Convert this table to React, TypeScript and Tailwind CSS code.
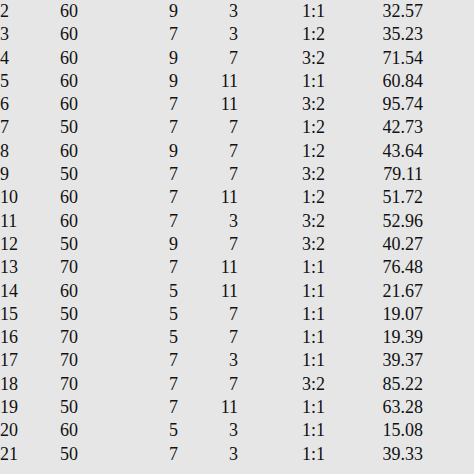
import React from 'react';

type Row = [string, string, string, string, string, string];

const rows: Row[] = [
  ['2', '60', '9', '3', '1:1', '32.57'],
  ['3', '60', '7', '3', '1:2', '35.23'],
  ['4', '60', '9', '7', '3:2', '71.54'],
  ['5', '60', '9', '11', '1:1', '60.84'],
  ['6', '60', '7', '11', '3:2', '95.74'],
  ['7', '50', '7', '7', '1:2', '42.73'],
  ['8', '60', '9', '7', '1:2', '43.64'],
  ['9', '50', '7', '7', '3:2', '79.11'],
  ['10', '60', '7', '11', '1:2', '51.72'],
  ['11', '60', '7', '3', '3:2', '52.96'],
  ['12', '50', '9', '7', '3:2', '40.27'],
  ['13', '70', '7', '11', '1:1', '76.48'],
  ['14', '60', '5', '11', '1:1', '21.67'],
  ['15', '50', '5', '7', '1:1', '19.07'],
  ['16', '70', '5', '7', '1:1', '19.39'],
  ['17', '70', '7', '3', '1:1', '39.37'],
  ['18', '70', '7', '7', '3:2', '85.22'],
  ['19', '50', '7', '11', '1:1', '63.28'],
  ['20', '60', '5', '3', '1:1', '15.08'],
  ['21', '50', '7', '3', '1:1', '39.33'],
];

export default function App() {
  return (
    <div className="w-[474px] h-[474px] overflow-hidden bg-[#e6e6e6] text-[#111] font-['Liberation_Serif',serif] text-[18px] leading-[23.3px]">
      {rows.map((r, i) => (
        <div key={i} className="flex">
          <span className="w-[60px] text-left">{r[0]}</span>
          <span className="w-[60px] text-left">{r[1]}</span>
          <span className="w-[58px] text-right">{r[2]}</span>
          <span className="w-[60px] text-right">{r[3]}</span>
          <span className="w-[100px] pl-[64px] text-left">{r[4]}</span>
          <span className="w-[85px] text-right">{r[5]}</span>
        </div>
      ))}
    </div>
  );
}
